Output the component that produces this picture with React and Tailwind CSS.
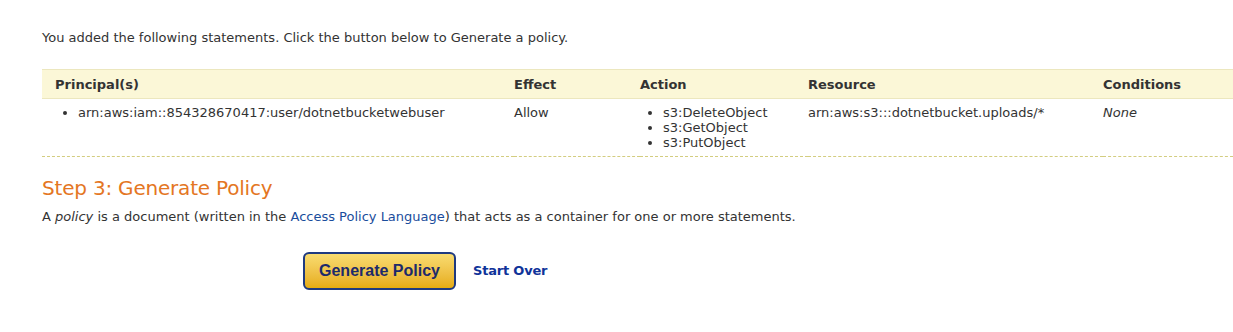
import React from "react";

const font = { fontFamily: '"DejaVu Sans", Verdana, sans-serif' };

const cell = "pt-[6px] pb-[6px] border-b border-dashed border-[#d3cd80]";
const head = "text-left font-bold text-[13px] border-t border-b border-[#ece7be]";

const App = () => {
  return (
    <div className="w-[1233px] h-[332px] bg-white overflow-hidden text-[#333] pl-[42px] pt-[29px]" style={font}>
      <p className="text-[13px] leading-[17px]">
        You added the following statements. Click the button below to Generate a policy.
      </p>

      <table className="mt-[23px] w-[1191px] text-[13px] leading-[15px] border-collapse">
        <thead>
          <tr className="bg-[#fbf7d7]">
            <th className={`h-[29px] pl-[13px] w-[472px] ${head}`}>Principal(s)</th>
            <th className={`w-[126px] ${head}`}>Effect</th>
            <th className={`w-[168px] ${head}`}>Action</th>
            <th className={`w-[295px] ${head}`}>Resource</th>
            <th className={head}>Conditions</th>
          </tr>
        </thead>
        <tbody>
          <tr className="align-top">
            <td className={`pl-[22px] ${cell}`}>
              <ul className="list-disc pl-[14px]">
                <li>arn:aws:iam::854328670417:user/dotnetbucketwebuser</li>
              </ul>
            </td>
            <td className={cell}>Allow</td>
            <td className={`pl-[9px] ${cell}`}>
              <ul className="list-disc pl-[14px]">
                <li>s3:DeleteObject</li>
                <li>s3:GetObject</li>
                <li>s3:PutObject</li>
              </ul>
            </td>
            <td className={cell}>arn:aws:s3:::dotnetbucket.uploads/*</td>
            <td className={`italic ${cell}`}>None</td>
          </tr>
        </tbody>
      </table>

      <h2 className="mt-[19px] text-[20px] leading-[24px] text-[#e47623] tracking-[-0.2px]">Step 3: Generate Policy</h2>
      <p className="mt-[8px] text-[13px] leading-[17px]">
        A <i>policy</i> is a document (written in the{" "}
        <span className="text-[#1a4d9c]">Access Policy Language</span>) that acts as a container for one or more statements.
      </p>

      <div className="mt-[27px] ml-[261px] flex items-center gap-[17px]">
        <button
          className="w-[153px] h-[38px] rounded-[6px] border-2 border-[#1f3a80] bg-gradient-to-b from-[#f9dc6f] to-[#e6ac0c] text-[#1c2a6b] font-bold text-[16px]"
          style={{ fontFamily: '"Liberation Sans", Arial, sans-serif' }}
        >
          Generate Policy
        </button>
        <span className="text-[#0f3399] font-bold text-[13px] tracking-[-0.2px]">Start Over</span>
      </div>
    </div>
  );
};

export default App;
